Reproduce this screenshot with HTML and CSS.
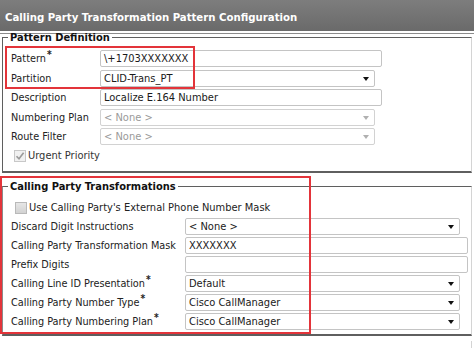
FILE: index.html
```html
<!DOCTYPE html>
<html lang="en">
<head>
  <meta charset="UTF-8">
  <title>Calling Party Transformation Pattern Configuration</title>
  <link rel="stylesheet" href="styles.css">
</head>
<body>
  <div class="page">
    <div class="title-bar">Calling Party Transformation Pattern Configuration</div>
    <div class="title-rule"></div>

    <fieldset class="group group-pattern">
      <legend>Pattern Definition</legend>
      <div class="row">
        <label>Pattern<span class="req">*</span></label>
        <div class="field">\+1703XXXXXXX</div>
      </div>
      <div class="row">
        <label>Partition</label>
        <div class="select">CLID-Trans_PT<span class="arrow"></span></div>
      </div>
      <div class="row">
        <label>Description</label>
        <div class="field">Localize E.164 Number</div>
      </div>
      <div class="row">
        <label>Numbering Plan</label>
        <div class="select disabled">&lt; None &gt;<span class="arrow"></span></div>
      </div>
      <div class="row">
        <label>Route Filter</label>
        <div class="select disabled">&lt; None &gt;<span class="arrow"></span></div>
      </div>
      <div class="check-row check-urgent">
        <span class="checkbox checked disabled">
          <svg width="10" height="10" viewBox="0 0 10 10"><path d="M1.5 5.2 L4 7.8 L8.6 1.8" fill="none" stroke="#9a9a9a" stroke-width="1.6"/></svg>
        </span>
        <span class="check-label disabled-label">Urgent Priority</span>
      </div>
    </fieldset>

    <fieldset class="group group-calling">
      <legend>Calling Party Transformations</legend>
      <div class="check-row check-mask">
        <span class="checkbox"></span>
        <span class="check-label">Use Calling Party's External Phone Number Mask</span>
      </div>
      <div class="row">
        <label>Discard Digit Instructions</label>
        <div class="select">&lt; None &gt;<span class="arrow"></span></div>
      </div>
      <div class="row">
        <label>Calling Party Transformation Mask</label>
        <div class="field">XXXXXXX</div>
      </div>
      <div class="row">
        <label>Prefix Digits</label>
        <div class="field"></div>
      </div>
      <div class="row">
        <label>Calling Line ID Presentation<span class="req">*</span></label>
        <div class="select">Default<span class="arrow"></span></div>
      </div>
      <div class="row">
        <label>Calling Party Number Type<span class="req">*</span></label>
        <div class="select">Cisco CallManager<span class="arrow"></span></div>
      </div>
      <div class="row">
        <label>Calling Party Numbering Plan<span class="req">*</span></label>
        <div class="select">Cisco CallManager<span class="arrow"></span></div>
      </div>
    </fieldset>

    <div class="group-next"></div>

    <!-- red call-outs drawn over the form -->
    <div class="highlight hl-pattern"></div>
    <div class="highlight hl-calling"></div>
  </div>
</body>
</html>
```

FILE: styles.css
```css
:root {
  --label-color: #222222;
  --field-border: #c4c4c4;
  --group-border: #5f5f5f;
  --callout: #e3343a;
  --ui-font: Tahoma, 'DejaVu Sans Condensed', 'DejaVu Sans', sans-serif;
}

* {
  box-sizing: border-box;
}

body {
  margin: 0;
  background: #ffffff;
  font-family: var(--ui-font);
  font-size: 10.8px;
  color: var(--label-color);
}

.page {
  position: relative;
  width: 474px;
  height: 348px;
  overflow: hidden;
}

.title-bar {
  height: 31px;
  padding-left: 5px;
  line-height: 36px;
  background: linear-gradient(to bottom, #7d7d7d, #6a6a6a);
  color: #ffffff;
  font-size: 11.3px;
  font-weight: bold;
  white-space: nowrap;
}

.title-rule {
  height: 1px;
  margin-top: 2px;
  background: #8c8c8c;
}

.group {
  margin: 0 2px;
  padding: 0 0 0 8px;
  border: 1px solid var(--group-border);
  border-right-color: #d4d4d4;
  border-bottom-width: 2px;
}

.group legend {
  padding: 0 2px;
  margin-left: -3px;
  line-height: 7px;
  font-size: 11px;
  font-weight: bold;
  color: #111111;
}

.group-pattern {
  padding-top: 9px;
  padding-bottom: 7px;
}

.group-calling {
  margin-top: 10px;
  padding-top: 10px;
  padding-bottom: 2px;
  border-left-color: #8a8a8a;
}

.row {
  display: flex;
  align-items: center;
  height: 17px;
  margin-bottom: 2.5px;
}

.group-calling .row {
  margin-bottom: 2px;
}

.row label {
  flex: none;
  width: 89px;
  white-space: nowrap;
}

.group-calling .row label {
  width: 174px;
}

.req {
  position: relative;
  top: -4px;
  margin-left: 1px;
  font-weight: bold;
  font-size: 10px;
}

.field,
.select {
  position: relative;
  height: 17px;
  padding-left: 3px;
  line-height: 16px;
  border: 1px solid var(--field-border);
  border-radius: 2px;
  background: #ffffff;
  font-size: 11px;
  color: #1a1a1a;
  white-space: nowrap;
}

.field {
  width: 282px;
}

.select {
  width: 275px;
}

.group-calling .field {
  width: 283px;
}

.arrow {
  position: absolute;
  right: 5px;
  top: 6px;
  width: 0;
  height: 0;
  border-left: 3.5px solid transparent;
  border-right: 3.5px solid transparent;
  border-top: 4px solid #111111;
}

.select.disabled {
  color: #9a9a9a;
  border-color: #d2d2d2;
}

.select.disabled .arrow {
  border-top-color: #b0b0b0;
}

.check-row {
  display: flex;
  align-items: center;
  height: 16px;
}

.check-urgent {
  margin-top: 2.5px;
  padding-left: 3px;
}

.check-mask {
  padding-left: 4px;
  margin-bottom: 2px;
}

.checkbox {
  display: flex;
  align-items: center;
  justify-content: center;
  width: 12px;
  height: 12px;
  border: 1px solid #b9b9b9;
  background: linear-gradient(to bottom, #e6e6e6, #d2d2d2);
}

.checkbox.disabled {
  background: #f1f1f1;
  border-color: #c8c8c8;
}

.check-label {
  margin-left: 2px;
  font-size: 11px;
}

.disabled-label {
  color: #333333;
}

.group-next {
  height: 20px;
  margin: 5px 2px 0;
  border-right: 1px solid #d4d4d4;
}

.highlight {
  position: absolute;
  border: 2px solid var(--callout);
  pointer-events: none;
}

.hl-pattern {
  left: 5px;
  top: 46px;
  width: 190px;
  height: 43px;
}

.hl-calling {
  left: 0;
  top: 176px;
  width: 311px;
  height: 158px;
}
```
